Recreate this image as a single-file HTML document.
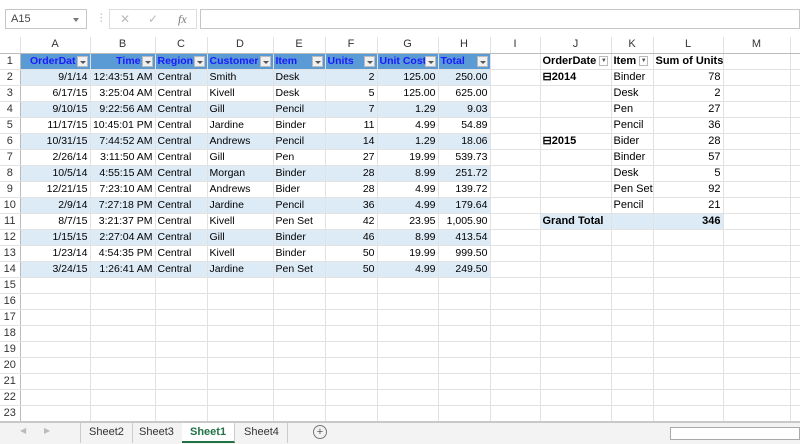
<!DOCTYPE html>
<html><head><style>
*{margin:0;padding:0;box-sizing:border-box}
body{width:800px;height:444px;overflow:hidden;background:#fff;font-family:"Liberation Sans",Arial,sans-serif;font-size:10.5px;color:#000;position:relative}
.top{position:absolute;left:0;top:0;width:800px;height:37px;background:#fff}
.nb{position:absolute;left:5px;top:9px;width:82px;height:20px;border:1px solid #c6c6c6;font-size:11px;padding:3px 5px;color:#444}
.nb:after{content:"";position:absolute;right:7px;top:8px;border:3px solid transparent;border-top:4px solid #777}
.fb{position:absolute;left:109px;top:9px;width:88px;height:20px;border:1px solid #ddd;color:#bbb;font-size:12px}
.fi{position:absolute;left:200px;top:9px;width:600px;height:20px;border:1px solid #c6c6c6}
table{position:absolute;left:0;top:37px;border-collapse:collapse;table-layout:fixed;width:800px}
td{height:16px;border-right:1px solid #e2e2e2;border-bottom:1px solid #e2e2e2;padding:0 2px;white-space:nowrap;overflow:hidden;line-height:15px}
tr.h td{background:#fff;text-align:center;color:#333;border-bottom:1px solid #bbb;font-size:11px}
td.rh{text-align:center;color:#333;padding:0;border-right:1px solid #bbb;font-size:11px}
.r{text-align:right}
.hd{background:#5b9bd5;color:#1a1aff;font-weight:bold;position:relative;padding-right:14px}
.hd i{position:absolute;right:2px;top:2px;width:11px;height:11px;background:#f0f0f0;border:1px solid #bbb}
.hd i:after{content:"";position:absolute;left:2px;top:4px;border:3px solid transparent;border-top:3px solid #555}
.b{background:#ddebf7}
.pv{font-size:11px}
.pb{font-weight:bold}
.gt{background:#ddebf7;font-weight:bold;font-size:11px}
.dd{display:inline-block;width:9px;height:10px;border:1px solid #bbb;font-size:6px;color:#555;text-align:center;line-height:8px;vertical-align:middle}
.tabs{position:absolute;left:0;top:421px;width:800px;height:23px;background:#f3f3f3;border-top:2px solid #c8c8c8;font-size:11px;color:#333}
.tab{position:absolute;top:0;height:20px;padding:3px 8px;border-right:1px solid #ccc}
</style></head><body>
<div class="top">
<div class="nb">A15</div>
<div style="position:absolute;left:96px;top:12px;color:#bbb">⋮</div>
<div class="fb"><span style="position:absolute;left:10px;top:2px">✕</span><span style="position:absolute;left:38px;top:2px">✓</span><span style="position:absolute;left:68px;top:2px;font-style:italic;font-family:'Liberation Serif';color:#777">fx</span></div>
<div class="fi"></div>
</div>
<table>
<colgroup><col style="width:20px"><col style="width:70px"><col style="width:65px"><col style="width:52px"><col style="width:66px"><col style="width:52px"><col style="width:52px"><col style="width:61px"><col style="width:52px"><col style="width:50px"><col style="width:71px"><col style="width:42px"><col style="width:70px"><col style="width:67px"><col style="width:10px"></colgroup>
<tr class="h"><td style="background:#fff"></td><td>A</td><td>B</td><td>C</td><td>D</td><td>E</td><td>F</td><td>G</td><td>H</td><td>I</td><td>J</td><td>K</td><td>L</td><td>M</td><td></td></tr>
<tr><td class="rh">1</td><td class="hd r">OrderDat<i></i></td><td class="hd r">Time<i></i></td><td class="hd">Region<i></i></td><td class="hd">Customer<i></i></td><td class="hd">Item<i></i></td><td class="hd">Units<i></i></td><td class="hd">Unit Cost<i></i></td><td class="hd">Total<i></i></td><td></td><td class="pv pb">OrderDate <span class="dd">▼</span></td><td class="pv pb">Item <span class="dd">▼</span></td><td class="pv pb">Sum of Units</td><td></td><td></td></tr>
<tr><td class="rh">2</td><td class="b r">9/1/14</td><td class="b r">12:43:51 AM</td><td class="b">Central</td><td class="b">Smith</td><td class="b">Desk</td><td class="b r">2</td><td class="b r">125.00</td><td class="b r">250.00</td><td></td><td class="pv pb">⊟2014</td><td class="pv">Binder</td><td class="pv r">78</td><td></td><td></td></tr>
<tr><td class="rh">3</td><td class="r">6/17/15</td><td class="r">3:25:04 AM</td><td>Central</td><td>Kivell</td><td>Desk</td><td class="r">5</td><td class="r">125.00</td><td class="r">625.00</td><td></td><td></td><td class="pv">Desk</td><td class="pv r">2</td><td></td><td></td></tr>
<tr><td class="rh">4</td><td class="b r">9/10/15</td><td class="b r">9:22:56 AM</td><td class="b">Central</td><td class="b">Gill</td><td class="b">Pencil</td><td class="b r">7</td><td class="b r">1.29</td><td class="b r">9.03</td><td></td><td></td><td class="pv">Pen</td><td class="pv r">27</td><td></td><td></td></tr>
<tr><td class="rh">5</td><td class="r">11/17/15</td><td class="r">10:45:01 PM</td><td>Central</td><td>Jardine</td><td>Binder</td><td class="r">11</td><td class="r">4.99</td><td class="r">54.89</td><td></td><td></td><td class="pv">Pencil</td><td class="pv r">36</td><td></td><td></td></tr>
<tr><td class="rh">6</td><td class="b r">10/31/15</td><td class="b r">7:44:52 AM</td><td class="b">Central</td><td class="b">Andrews</td><td class="b">Pencil</td><td class="b r">14</td><td class="b r">1.29</td><td class="b r">18.06</td><td></td><td class="pv pb">⊟2015</td><td class="pv">Bider</td><td class="pv r">28</td><td></td><td></td></tr>
<tr><td class="rh">7</td><td class="r">2/26/14</td><td class="r">3:11:50 AM</td><td>Central</td><td>Gill</td><td>Pen</td><td class="r">27</td><td class="r">19.99</td><td class="r">539.73</td><td></td><td></td><td class="pv">Binder</td><td class="pv r">57</td><td></td><td></td></tr>
<tr><td class="rh">8</td><td class="b r">10/5/14</td><td class="b r">4:55:15 AM</td><td class="b">Central</td><td class="b">Morgan</td><td class="b">Binder</td><td class="b r">28</td><td class="b r">8.99</td><td class="b r">251.72</td><td></td><td></td><td class="pv">Desk</td><td class="pv r">5</td><td></td><td></td></tr>
<tr><td class="rh">9</td><td class="r">12/21/15</td><td class="r">7:23:10 AM</td><td>Central</td><td>Andrews</td><td>Bider</td><td class="r">28</td><td class="r">4.99</td><td class="r">139.72</td><td></td><td></td><td class="pv">Pen Set</td><td class="pv r">92</td><td></td><td></td></tr>
<tr><td class="rh">10</td><td class="b r">2/9/14</td><td class="b r">7:27:18 PM</td><td class="b">Central</td><td class="b">Jardine</td><td class="b">Pencil</td><td class="b r">36</td><td class="b r">4.99</td><td class="b r">179.64</td><td></td><td></td><td class="pv">Pencil</td><td class="pv r">21</td><td></td><td></td></tr>
<tr><td class="rh">11</td><td class="r">8/7/15</td><td class="r">3:21:37 PM</td><td>Central</td><td>Kivell</td><td>Pen Set</td><td class="r">42</td><td class="r">23.95</td><td class="r">1,005.90</td><td></td><td class="gt">Grand Total</td><td class="gt"></td><td class="gt r">346</td><td></td><td></td></tr>
<tr><td class="rh">12</td><td class="b r">1/15/15</td><td class="b r">2:27:04 AM</td><td class="b">Central</td><td class="b">Gill</td><td class="b">Binder</td><td class="b r">46</td><td class="b r">8.99</td><td class="b r">413.54</td><td></td><td></td><td></td><td></td><td></td><td></td></tr>
<tr><td class="rh">13</td><td class="r">1/23/14</td><td class="r">4:54:35 PM</td><td>Central</td><td>Kivell</td><td>Binder</td><td class="r">50</td><td class="r">19.99</td><td class="r">999.50</td><td></td><td></td><td></td><td></td><td></td><td></td></tr>
<tr><td class="rh">14</td><td class="b r">3/24/15</td><td class="b r">1:26:41 AM</td><td class="b">Central</td><td class="b">Jardine</td><td class="b">Pen Set</td><td class="b r">50</td><td class="b r">4.99</td><td class="b r">249.50</td><td></td><td></td><td></td><td></td><td></td><td></td></tr>
<tr><td class="rh">15</td><td></td><td></td><td></td><td></td><td></td><td></td><td></td><td></td><td></td><td></td><td></td><td></td><td></td><td></td></tr>
<tr><td class="rh">16</td><td></td><td></td><td></td><td></td><td></td><td></td><td></td><td></td><td></td><td></td><td></td><td></td><td></td><td></td></tr>
<tr><td class="rh">17</td><td></td><td></td><td></td><td></td><td></td><td></td><td></td><td></td><td></td><td></td><td></td><td></td><td></td><td></td></tr>
<tr><td class="rh">18</td><td></td><td></td><td></td><td></td><td></td><td></td><td></td><td></td><td></td><td></td><td></td><td></td><td></td><td></td></tr>
<tr><td class="rh">19</td><td></td><td></td><td></td><td></td><td></td><td></td><td></td><td></td><td></td><td></td><td></td><td></td><td></td><td></td></tr>
<tr><td class="rh">20</td><td></td><td></td><td></td><td></td><td></td><td></td><td></td><td></td><td></td><td></td><td></td><td></td><td></td><td></td></tr>
<tr><td class="rh">21</td><td></td><td></td><td></td><td></td><td></td><td></td><td></td><td></td><td></td><td></td><td></td><td></td><td></td><td></td></tr>
<tr><td class="rh">22</td><td></td><td></td><td></td><td></td><td></td><td></td><td></td><td></td><td></td><td></td><td></td><td></td><td></td><td></td></tr>
<tr><td class="rh">23</td><td></td><td></td><td></td><td></td><td></td><td></td><td></td><td></td><td></td><td></td><td></td><td></td><td></td><td></td></tr>
</table>
<div class="tabs">
<span style="position:absolute;left:20px;top:3px;color:#bbb;font-size:8px">◀</span><span style="position:absolute;left:44px;top:3px;color:#bbb;font-size:8px">▶</span>
<div class="tab" style="left:80px;border-left:1px solid #ccc">Sheet2</div>
<div class="tab" style="left:131px">Sheet3</div>
<div class="tab" style="left:182px;background:#fff;color:#217346;font-weight:bold;border-bottom:2px solid #217346">Sheet1</div>
<div class="tab" style="left:236px">Sheet4</div>
<div style="position:absolute;left:313px;top:2px;width:14px;height:14px;border:1px solid #777;border-radius:50%;text-align:center;line-height:12px;color:#555">+</div>
<div style="position:absolute;left:670px;top:4px;width:130px;height:13px;border:1px solid #aaa;background:#fff"></div>
</div>
</body></html>
